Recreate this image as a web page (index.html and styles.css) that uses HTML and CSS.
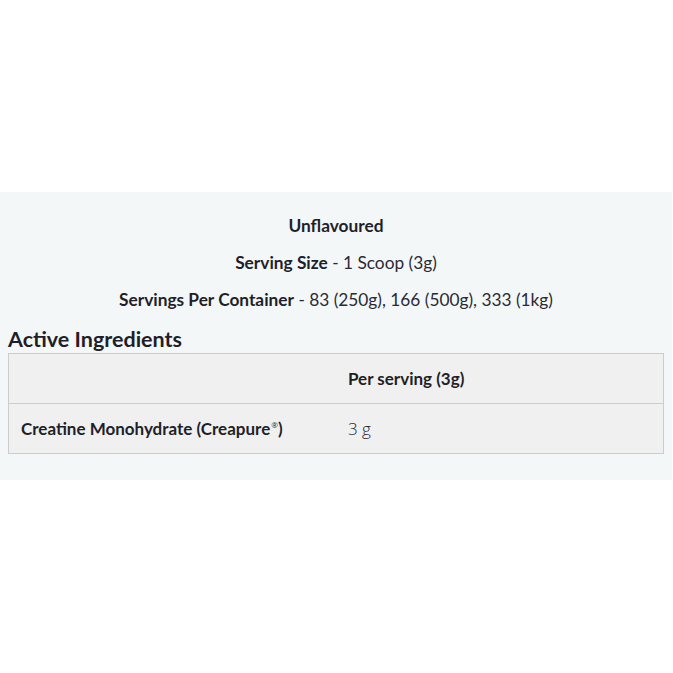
FILE: index.html
```html
<!DOCTYPE html>
<html>
<head>
<meta charset="utf-8">
<link rel="stylesheet" href="styles.css">
</head>
<body>
<div class="top-space"></div>
<section class="panel">
  <div class="info">
    <p class="line"><strong>Unflavoured</strong></p>
    <p class="line"><strong>Serving Size</strong> - 1 Scoop (3g)</p>
    <p class="line"><strong>Servings Per Container</strong> - 83 (250g), 166 (500g), 333 (1kg)</p>
  </div>
  <h2 class="heading">Active Ingredients</h2>
  <table class="table">
    <tr class="row">
      <th class="cell name"></th>
      <th class="cell value head">Per serving (3g)</th>
    </tr>
    <tr class="row">
      <td class="cell name">Creatine Monohydrate (Creapure<sup class="reg">®</sup>)</td>
      <td class="cell value amount">3 g</td>
    </tr>
  </table>
</section>
</body>
</html>
```

FILE: styles.css
```css
html, body {
  margin: 0;
  padding: 0;
  background: #ffffff;
}
body {
  font-family: "Lato", "Open Sans", sans-serif;
  color: #23232f;
  width: 673px;
  height: 673px;
  overflow: hidden;
}
.top-space {
  height: 192px;
}
.panel {
  width: 672px;
  height: 288px;
  background: #f3f7f7;
  box-sizing: border-box;
  padding: 24px 0 0 8px;
  display: flex;
  flex-direction: column;
}
.info {
  display: flex;
  flex-direction: column;
  align-items: center;
  gap: 17px;
  padding-right: 8px;
}
.line {
  margin: 0;
  font-size: 17.3px;
  line-height: 20px;
  font-weight: 400;
  color: #2a2a35;
}
.line strong {
  font-weight: 700;
  color: #1f1f2a;
}
.heading {
  margin: 18px 0 3px 0;
  font-size: 21.5px;
  line-height: 22px;
  font-weight: 700;
  color: #1f1f2a;
}
.table {
  width: 656px;
  border-collapse: collapse;
  background: #f0f0f0;
  border: 1px solid #cccccc;
}
.row {
  height: 50px;
}
.row + .row .cell {
  border-top: 1px solid #cccccc;
}
.cell {
  padding: 0 0 0 12px;
  font-size: 17px;
  text-align: left;
  vertical-align: middle;
  font-weight: 700;
  color: #1f1f2a;
}
.name {
  width: 315px;
}
.amount {
  font-family: "Open Sans", sans-serif;
  font-weight: 300;
  font-size: 17px;
  color: #26262f;
}
.reg {
  font-family: "Open Sans", sans-serif;
  font-weight: 400;
  font-size: 8px;
  vertical-align: 7px;
  line-height: 0;
  padding-left: 1px;
}
```
